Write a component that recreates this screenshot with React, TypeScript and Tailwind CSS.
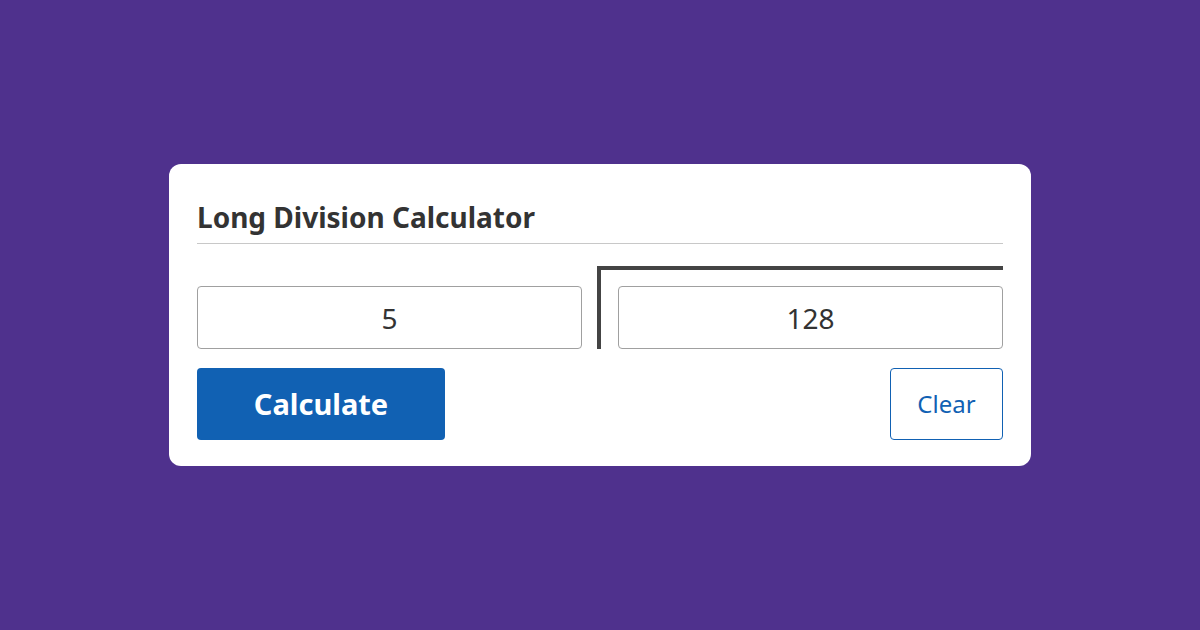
import { useState } from 'react';

export default function App() {
  const [divisor, setDivisor] = useState('5');
  const [dividend, setDividend] = useState('128');

  return (
    <div
      className="w-[1200px] h-[630px] bg-[#4f318d] flex items-center justify-center"
      style={{ fontFamily: '"Noto Sans", "Open Sans", sans-serif' }}
    >
      <div className="w-[862px] bg-white rounded-xl px-7 pt-[35px] pb-[26px]">
        <h1 className="text-[28px] leading-[36px] font-bold text-[#333] pb-[8px] border-b border-[#c8c8c8]">
          Long Division Calculator
        </h1>

        <div className="flex mt-[22px]">
          <input
            value={divisor}
            onChange={(e) => setDivisor(e.target.value)}
            className="w-[385px] h-[63px] mt-[20px] border border-[#a0a0a0] rounded text-center text-[28px] text-[#333] outline-none"
          />
          <div className="ml-[15px] flex-1 border-l-4 border-t-4 border-[#444] pl-[17px] pt-[16px]">
            <input
              value={dividend}
              onChange={(e) => setDividend(e.target.value)}
              className="w-full h-[63px] border border-[#a0a0a0] rounded text-center text-[28px] text-[#333] outline-none"
            />
          </div>
        </div>

        <div className="flex justify-between items-center mt-[19px]">
          <button className="w-[248px] h-[72px] bg-[#1161b3] rounded text-white text-[29px] font-bold">
            Calculate
          </button>
          <button className="w-[113px] h-[72px] border border-[#1161b3] rounded text-[#1161b3] text-[24px]">
            Clear
          </button>
        </div>
      </div>
    </div>
  );
}
